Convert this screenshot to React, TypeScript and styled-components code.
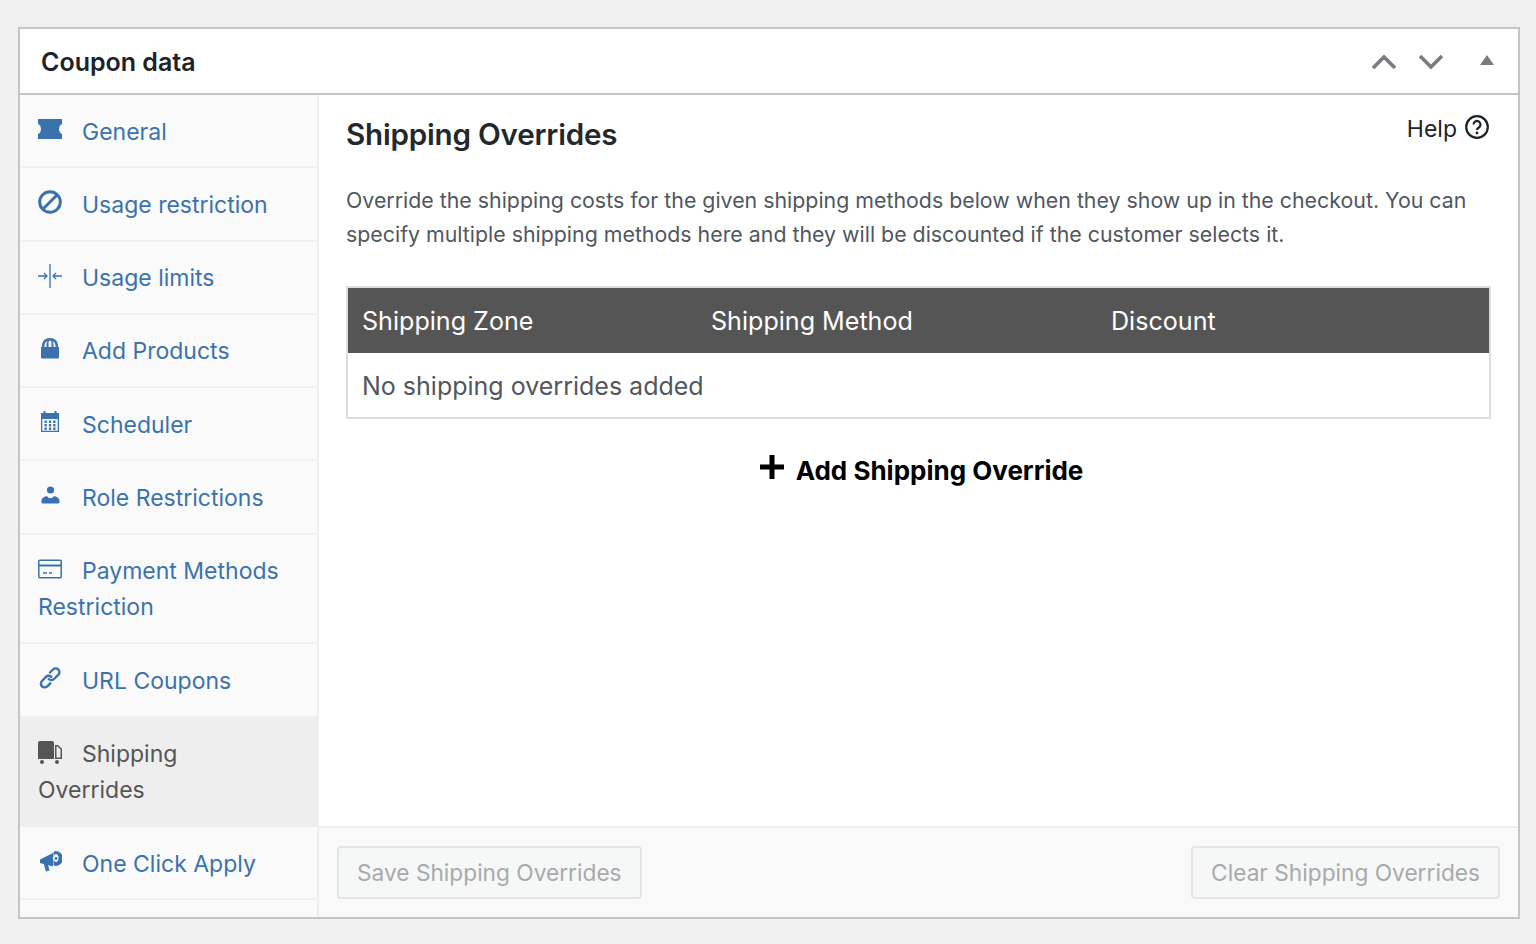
import React from "react";
import styled, { createGlobalStyle } from "styled-components";

const Global = createGlobalStyle`
  html, body { margin: 0; padding: 0; background: #f0f0f1; }
  body { font-family: Inter, "Liberation Sans", sans-serif; height: 944px; overflow: hidden; }
`;

const Page = styled.div`
  padding: 27px 16px 0 18px;
`;
const Panel = styled.section`
  width: 1502px;
  height: 892px;
  box-sizing: border-box;
  border: 2px solid #c3c4c7;
  background: #fff;
  display: flex;
  flex-direction: column;
`;
const Header = styled.header`
  height: 66px;
  flex: none;
  box-sizing: border-box;
  border-bottom: 2px solid #c3c4c7;
  display: flex;
  align-items: center;
  justify-content: space-between;
  padding: 0 23px 0 21px;
`;
const Title = styled.h2`
  margin: 1px 0 0;
  font-size: 25px;
  line-height: 64px;
  font-weight: 600;
  color: #1d2327;
`;
const Controls = styled.div`
  display: flex;
  align-items: center;
  gap: 21px;
  color: #787c82;
`;
const Chevron = styled.svg`
  width: 26px;
  height: 16px;
  margin-top: 2px;
`;
const Toggle = styled.svg`
  width: 16px;
  height: 16px;
  margin-left: 14px;
`;
const Body = styled.div`
  flex: 1;
  display: flex;
  min-height: 0;
`;
const Side = styled.nav`
  width: 299px;
  flex: none;
  box-sizing: border-box;
  background: #fafafa;
  border-right: 2px solid #eee;
  display: flex;
  flex-direction: column;
`;
const Tab = styled.div<{ $active?: boolean; $tall?: boolean }>`
  box-sizing: border-box;
  height: ${(p) => (p.$tall ? "109.5px" : "73.3px")};
  padding: 18.5px 18px 0 18px;
  font-size: 23px;
  line-height: 36px;
  color: ${(p) => (p.$active ? "#555" : "#3a72ad")};
  background: ${(p) => (p.$active ? "#eee" : "transparent")};
  border-bottom: ${(p) => (p.$active ? "0" : "2px solid #f0f0f0")};
  margin-right: ${(p) => (p.$active ? "-2px" : "0")};
`;
const TabIcon = styled.svg`
  display: inline-block;
  width: 24px;
  height: 24px;
  margin: 0 20.5px 0 -0.5px;
  vertical-align: -1px;
  position: relative;
  top: 0.5px;
`;
const Main = styled.main`
  flex: 1;
  min-width: 0;
  display: flex;
  flex-direction: column;
`;
const Content = styled.div`
  flex: 1;
  padding: 18px 27px 0 27px;
`;
const TitleRow = styled.div`
  display: flex;
  justify-content: space-between;
  align-items: flex-start;
`;
const Heading = styled.h3`
  margin: 0;
  font-size: 29.6px;
  line-height: 42px;
  font-weight: 600;
  letter-spacing: -0.2px;
  color: #23282d;
`;
const Help = styled.div`
  display: flex;
  align-items: center;
  gap: 8px;
  font-size: 23px;
  line-height: 30px;
  color: #1d2327;
  margin-right: 2px;
  padding-top: 1px;
`;
const HelpIcon = styled.svg`
  width: 24px;
  height: 24px;
  margin-top: -4px;
`;
const Lead = styled.p`
  margin: 28px 0 35px;
  font-size: 21.35px;
  line-height: 34px;
  color: #50575e;
  white-space: nowrap;
`;
const Table = styled.div`
  border: 2px solid #ddd;
  width: 1145px;
  box-sizing: border-box;
`;
const HeadRow = styled.div`
  height: 65px;
  background: #555;
  color: #fff;
  display: grid;
  grid-template-columns: 349px 400px 1fr;
  padding: 0 14px;
  align-items: center;
  font-size: 25.1px;
  font-weight: 400;
`;
const EmptyRow = styled.div`
  height: 64px;
  box-sizing: border-box;
  padding: 2px 14px 0;
  display: flex;
  align-items: center;
  font-size: 25px;
  color: #50575e;
`;
const Add = styled.div`
  margin: 33px 0 0 6px;
  display: flex;
  justify-content: center;
  align-items: center;
  gap: 12px;
  font-size: 26px;
  font-weight: 700;
  line-height: 38px;
  color: #000;
`;
const Plus = styled.svg`
  width: 24px;
  height: 24px;
  margin-top: -8px;
`;
const Footer = styled.footer`
  height: 91px;
  flex: none;
  box-sizing: border-box;
  background: #f9f9f9;
  border-top: 2px solid #eee;
  display: flex;
  justify-content: space-between;
  padding: 18px 18px 0 18px;
`;
const Disabled = styled.button`
  height: 53px;
  box-sizing: border-box;
  border: 2px solid #e3e4e5;
  border-radius: 4px;
  background: #f6f7f7;
  color: #a7aaad;
  font-family: inherit;
  font-size: 22.7px;
  padding: 0 18px;
  white-space: nowrap;
`;

const C = "currentColor";
const icons: Record<string, React.ReactNode> = {
  ticket: <path fill={C} d="M0 2h24v5c-2 .8-3 2.800-3 5s1 4.200 3 5v5H0v-5c2-.8 3-2.800 3-5s-1-4.200-3-5z" />,
  ban: (
    <g fill="none" stroke={C} strokeWidth="3">
      <circle cx="12" cy="12" r="10.300" />
      <path d="M5 19 19 5" />
    </g>
  ),
  limits: (
    <g fill="none" stroke={C} strokeWidth="1.300">
      <path d="M12 0v24M0 12h9M6 9l3 3-3 3M24 12h-9M18 9l-3 3 3 3" />
    </g>
  ),
  bag: <path fill={C} fillRule="evenodd" d="M4 9c0-5 3-8 8-8s8 3 8 8v1h1v10.500a1 1 0 0 1-1 1H4a1 1 0 0 1-1-1V10h1zm2.500 1h2V8c0-2 .5-3.500 1.500-4-2.500.5-3.500 2.500-3.500 5zm4 0h3V6c0-1.500-.5-2.500-1.500-2.500S10.500 4.500 10.500 6zm5 0h2V9c0-2.500-1-4.500-3.500-5 1 .5 1.500 2 1.500 4z" />,
  cal: (
    <g fill={C}>
      <path fillRule="evenodd" d="M3 3h2.500V1h2v2h9V1h2v2H21v19H3zm1.300 6v11.700h15.400V9z" />
      <path d="M6.500 10.500h2.300V13H6.500zM10.900 10.500h2.300V13h-2.300zM15.200 10.500h2.300V13h-2.300zM6.500 14h2.300v2.500H6.500zM10.900 14h2.300v2.500h-2.300zM15.200 14h2.300v2.500h-2.300zM6.500 17.500h2.300V20H6.500zM10.900 17.500h2.300V20h-2.300zM15.200 17.500h2.300V20h-2.300z" />
    </g>
  ),
  user: (
    <g fill={C}>
      <circle cx="12.500" cy="7" r="3.600" />
      <path d="M5 20.500c-1.300 0-1.600-.8-1.600-2.200 0-2.800 2.300-4.500 5.600-5.200.8 1.500 2.200 2.200 3.500 2.200s2.700-.7 3.500-2.200c3.300.7 5.600 2.400 5.600 5.200 0 1.400-.3 2.200-1.600 2.200z" />
    </g>
  ),
  card: (
    <g fill="none" stroke={C} strokeWidth="1.500">
      <rect x=".8" y="3.300" width="22.400" height="17.400" rx="1" />
      <path d="M1 8.500h22" strokeWidth="2" />
      <path d="M5 16h4M11 16h3" />
    </g>
  ),
  link: (
    <g fill="none" stroke={C} strokeWidth="2.400" strokeLinecap="round">
      <path d="M12 6.500 15 3.500a3.700 3.700 0 0 1 5.300 5.300L16 13a3.700 3.700 0 0 1-5.300 0" />
      <path d="M13.300 10.800a3.700 3.700 0 0 0-5.300 0L4 15a3.700 3.700 0 0 0 5.300 5.300l3-3" />
    </g>
  ),
  truck: (
    <g fill={C}>
      <path d="M0 3a2 2 0 0 1 2-2h12a2 2 0 0 1 2 2v16H0z" />
      <path fillRule="evenodd" d="M17 5h3l4 4v10h-7zm1.500 1.500v11h4V9.500l-3-3z" />
      <circle cx="4" cy="22" r="2" />
      <circle cx="19" cy="22" r="2" />
    </g>
  ),
  mega: (
    <g fill={C}>
      <path d="M2 10.500 15 4v13.500L2 14z" />
      <path d="M6 15h5l-1 1 1.500 5.500-3.500 1L6 16z" />
      <path fillRule="evenodd" d="M17.500 2a5.500 5.500 0 1 1 0 15 5 5 0 0 1-2-1V3a5 5 0 0 1 2-1zm.5 3a2.500 4 0 1 0 .01 0z" />
      <circle cx="18" cy="9.500" r="1.400" />
    </g>
  ),
};

const items: { lines: string[]; icon: string; tall?: boolean; active?: boolean }[] = [
  { lines: ["General"], icon: "ticket" },
  { lines: ["Usage restriction"], icon: "ban" },
  { lines: ["Usage limits"], icon: "limits" },
  { lines: ["Add Products"], icon: "bag" },
  { lines: ["Scheduler"], icon: "cal" },
  { lines: ["Role Restrictions"], icon: "user" },
  { lines: ["Payment Methods", "Restriction"], icon: "card", tall: true },
  { lines: ["URL Coupons"], icon: "link" },
  { lines: ["Shipping", "Overrides"], icon: "truck", tall: true, active: true },
  { lines: ["One Click Apply"], icon: "mega" },
];

export default function App() {
  return (
    <Page>
      <Global />
      <Panel>
        <Header>
          <Title>Coupon data</Title>
          <Controls>
            <Chevron viewBox="0 0 26 16"><path d="M2 14 13 3l11 11" fill="none" stroke="currentColor" strokeWidth="3.600" /></Chevron>
            <Chevron viewBox="0 0 26 16"><path d="M2 2l11 11L24 2" fill="none" stroke="currentColor" strokeWidth="3.600" /></Chevron>
            <Toggle viewBox="0 0 16 16"><path d="M8 2 15 12H1z" fill="currentColor" /></Toggle>
          </Controls>
        </Header>
        <Body>
          <Side>
            {items.map((it) => (
              <Tab key={it.lines.join(" ")} $active={it.active} $tall={it.tall}>
                <TabIcon viewBox="0 0 24 24" aria-hidden="true">{icons[it.icon]}</TabIcon>
                {it.lines[0]}
                {it.lines[1] && <br />}
                {it.lines[1]}
              </Tab>
            ))}
          </Side>
          <Main>
            <Content>
              <TitleRow>
                <Heading>Shipping Overrides</Heading>
                <Help>
                  Help
                  <HelpIcon viewBox="0 0 24 24">
                    <circle cx="12" cy="12" r="10.800" fill="none" stroke="#1d2327" strokeWidth="2.200" />
                    <path d="M8.500 9.500a3.500 3.500 0 1 1 5.300 3c-1.200.7-1.800 1.300-1.800 2.500" fill="none" stroke="#1d2327" strokeWidth="2.200" />
                    <circle cx="12" cy="18" r="1.400" fill="#1d2327" />
                  </HelpIcon>
                </Help>
              </TitleRow>
              <Lead>
                Override the shipping costs for the given shipping methods below when they show up in the checkout. You can
                <br />
                specify multiple shipping methods here and they will be discounted if the customer selects it.
              </Lead>
              <Table>
                <HeadRow>
                  <span>Shipping Zone</span>
                  <span>Shipping Method</span>
                  <span>Discount</span>
                </HeadRow>
                <EmptyRow>No shipping overrides added</EmptyRow>
              </Table>
              <Add>
                <Plus viewBox="0 0 24 24"><path d="M9.500 0h5v9.500H24v5h-9.500V24h-5v-9.500H0v-5h9.500z" fill="#000" /></Plus>
                Add Shipping Override
              </Add>
            </Content>
            <Footer>
              <Disabled disabled>Save Shipping Overrides</Disabled>
              <Disabled disabled>Clear Shipping Overrides</Disabled>
            </Footer>
          </Main>
        </Body>
      </Panel>
    </Page>
  );
}
